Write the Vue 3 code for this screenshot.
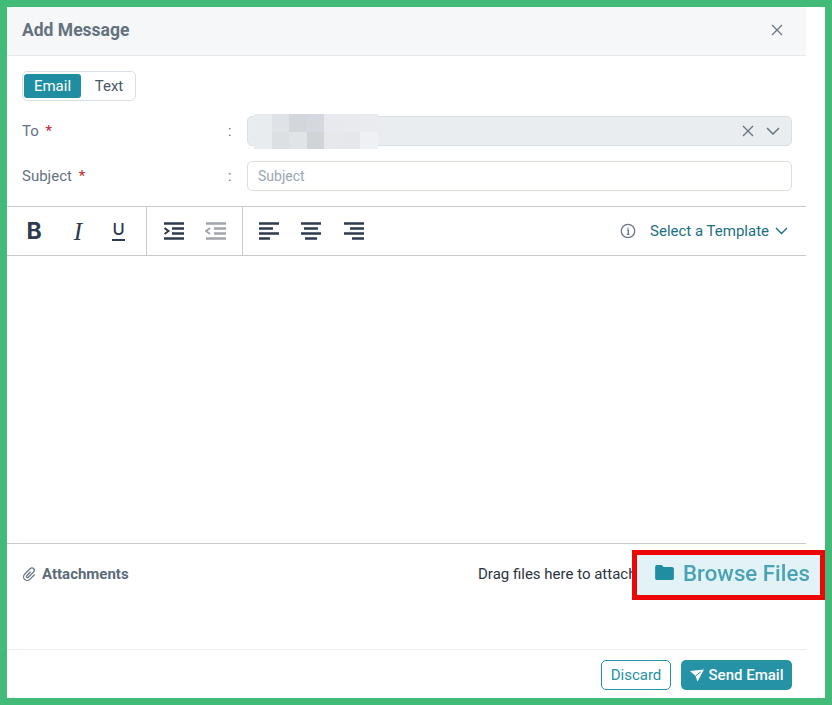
<script setup>
const cells = ['#e9ecef','#dfe2e6','#d3d6db','#d5d8de','#e7e9ee','#e8eaee','#e9ebef','#e9ecef','#dde0e3','#e1e4e7','#d1d4d7','#e6e8ec','#e5e7ea','#eef0f3']
</script>

<template>
  <div class="frame">
    <div class="modal">
      <header class="head">
        <h1>Add Message</h1>
        <svg width="12" height="12" viewBox="0 0 12 12"><path d="M1 1l10 10M11 1L1 11" stroke="#6b7785" stroke-width="1.3" fill="none" /></svg>
      </header>

      <div class="form">
        <div class="toggle">
          <span class="tab on">Email</span>
          <span class="tab">Text</span>
        </div>
        <div class="row r-to">
          <label>To <em>*</em></label>
          <span class="colon">:</span>
          <div class="field filled">
            <svg width="12" height="12" viewBox="0 0 12 12"><path d="M1 1l10 10M11 1L1 11" stroke="#667382" stroke-width="1.3" fill="none" /></svg>
            <svg width="14" height="8" viewBox="0 0 14 8"><path d="M1 1l6 6 6-6" stroke="#5f6d7c" stroke-width="1.4" fill="none" /></svg>
          </div>
          <div class="mosaic">
            <i v-for="(c, n) in cells" :key="n" :style="{ background: c }"></i>
          </div>
        </div>
        <div class="row r-sub">
          <label>Subject <em>*</em></label>
          <span class="colon">:</span>
          <div class="field"><span class="ph">Subject</span></div>
        </div>
      </div>

      <div class="toolbar">
        <div class="group g1">
          <span class="glyph b">B</span>
          <span class="glyph i">I</span>
          <span class="glyph u">U</span>
        </div>
        <div class="group g2">
          <svg width="21" height="18" viewBox="0 0 21 18"><path d="M0 1.5h20M8 6.5h12M8 11.5h12M0 16.5h20" stroke="#2e3a4d" stroke-width="2.4" fill="none" /><path d="M.5 6l4 3-4 3" stroke="#2e3a4d" stroke-width="2" fill="none" /></svg>
          <svg width="21" height="18" viewBox="0 0 21 18"><path d="M1 1.5h20M9 6.5h12M9 11.5h12M1 16.5h20" stroke="#a0a5ab" stroke-width="2.4" fill="none" /><path d="M5 6L1 9l4 3" stroke="#a0a5ab" stroke-width="2" fill="none" /></svg>
        </div>
        <div class="group g3">
          <svg width="20" height="18" viewBox="0 0 20 18"><path d="M0 1.5h20M0 6.5h14M0 11.5h20M0 16.5h11" stroke="#2e3a4d" stroke-width="2.4" fill="none" /></svg>
          <svg width="20" height="18" viewBox="0 0 20 18"><path d="M0 1.5h20M3 6.5h14M0 11.5h20M4 16.5h12" stroke="#2e3a4d" stroke-width="2.4" fill="none" /></svg>
          <svg class="last" width="20" height="18" viewBox="0 0 20 18"><path d="M0 1.5h20M6 6.5h14M0 11.5h20M8 16.5h12" stroke="#2e3a4d" stroke-width="2.4" fill="none" /></svg>
        </div>
        <div class="template">
          <svg class="info" width="16" height="16" viewBox="0 0 16 16"><circle cx="8" cy="8" r="6.7" stroke="#6b7785" stroke-width="1.3" fill="none" /><path d="M7 7.2h1.3v4M6.8 11.3h2.6M8 4.4v1.4" stroke="#6b7785" stroke-width="1.3" fill="none" /></svg>
          <span>Select a Template</span>
          <svg width="13" height="8" viewBox="0 0 13 8"><path d="M1 1l5.5 5.5L12 1" stroke="#1b6f7f" stroke-width="1.4" fill="none" /></svg>
        </div>
      </div>

      <div class="editor"></div>

      <div class="attach">
        <div class="att-left">
          <svg class="clip" width="15" height="15" viewBox="0 0 14 14"><path transform="rotate(45 7 7)" d="M10.4 3.5v6.5a3.4 3.4 0 0 1-6.8 0V2.6a2.2 2.2 0 0 1 4.4 0v7a1 1 0 0 1-2 0V4.5" stroke="#6f7b88" stroke-width="1.25" fill="none" /></svg>
          <strong>Attachments</strong>
        </div>
        <span class="drag">Drag files here to attach</span>
      </div>

      <footer class="foot">
        <button class="btn ghost">Discard</button>
        <button class="btn solid">
          <svg width="14" height="13" viewBox="0 0 14 13"><path d="M0 2L14 .5 7.5 12.5 5.5 7z" fill="#fff" /><path d="M5.5 7l5-4" stroke="#2592a6" stroke-width="1" /></svg>
          Send Email
        </button>
      </footer>
    </div>

    <div class="highlight">
      <svg width="19" height="15" viewBox="0 0 20 16"><path d="M0 2a2 2 0 0 1 2-2h5l2 2h9a2 2 0 0 1 2 2v10a2 2 0 0 1-2 2H2a2 2 0 0 1-2-2z" fill="#1f8ea3" /></svg>
      <span>Browse Files</span>
    </div>
  </div>
</template>

<style scoped>
.frame {
  position: relative;
  box-sizing: border-box;
  width: 832px;
  height: 705px;
  border: 7px solid #42ba78;
  background: #fff;
  font-family: Roboto, "Liberation Sans", sans-serif;
  overflow: hidden;
}
.modal {
  width: 799px;
  height: 691px;
  display: flex;
  flex-direction: column;
}
.head {
  box-sizing: border-box;
  height: 49px;
  flex: none;
  padding: 0 23px 3px 15px;
  background: #f6f7f9;
  border-bottom: 1px solid #e7eaed;
  display: flex;
  align-items: center;
  justify-content: space-between;
}
.head h1 {
  margin: 0;
  font-size: 17.5px;
  font-weight: 700;
  color: #64727f;
}
.form {
  box-sizing: border-box;
  height: 150px;
  flex: none;
  padding: 15px 14px 0 15px;
}
.toggle {
  box-sizing: border-box;
  display: inline-flex;
  width: 114px;
  height: 30px;
  padding: 2px 1px;
  border: 1px solid #d8dee7;
  border-radius: 5px;
  font-size: 15px;
  color: #4a5767;
}
.tab {
  flex: 1;
  display: flex;
  align-items: center;
  justify-content: center;
  padding-left: 3px;
}
.tab.on {
  flex: 0 0 57px;
  background: #1f8ea3;
  color: #fff;
  border-radius: 3px;
  padding-left: 0;
}
.row {
  position: relative;
  display: flex;
  align-items: center;
  height: 30px;
  font-size: 15px;
  color: #66717f;
}
.r-to { margin-top: 15px; }
.r-sub { margin-top: 15px; }
.row label { width: 206px; }
.row em {
  font-style: normal;
  color: #c0272d;
  margin-left: 3px;
}
.colon { width: 19px; font-size: 14px; color: #5d6977; }
.field {
  box-sizing: border-box;
  flex: 1;
  height: 30px;
  border: 1px solid #dadfe5;
  border-radius: 5px;
  display: flex;
  align-items: center;
  padding-left: 10px;
}
.field.filled {
  background: #e9edf0;
  justify-content: flex-end;
  gap: 12px;
  padding-right: 11px;
}
.ph { font-size: 14px; color: #9aa6b2; }
.mosaic {
  position: absolute;
  left: 232px;
  top: -2px;
  width: 124px;
  height: 35px;
  display: grid;
  grid-template-columns: 18px 17px 18px 17px 18px 18px 18px;
  grid-template-rows: 1fr 1fr;
}
.toolbar {
  box-sizing: border-box;
  height: 50px;
  flex: none;
  border-top: 1px solid #c9c9c9;
  border-bottom: 1px solid #c9c9c9;
  display: flex;
  align-items: stretch;
}
.group {
  display: flex;
  align-items: center;
  box-sizing: border-box;
  border-right: 1px solid #c9c9c9;
}
.g1 { width: 140px; padding-left: 17px; }
.g2 { width: 96px; padding-left: 17px; gap: 20px; }
.g3 { border: 0; padding-left: 16px; gap: 22px; }
.last { margin-left: 1px; }
.glyph {
  color: #2e3a4d;
  text-align: center;
  line-height: 1;
}
.b { font-family: Inter, sans-serif; font-weight: 700; font-size: 23px; width: 20px; margin-right: 24px; }
.i { font-family: "Liberation Serif", serif; font-style: italic; font-size: 25px; width: 20px; margin-right: 24px; }
.u {
  font-family: Inter, sans-serif;
  font-size: 16.5px;
  font-weight: 500;
  width: 13px;
  padding-bottom: 1px;
  border-bottom: 2px solid #2e3a4d;
}
.template {
  margin-left: auto;
  padding-right: 18px;
  display: flex;
  align-items: center;
  font-size: 15px;
  color: #1b6f7f;
}
.info { margin-right: 14px; }
.template span { margin-right: 6px; }
.editor { height: 287px; flex: none; }
.attach {
  box-sizing: border-box;
  height: 107px;
  flex: none;
  border-top: 1px solid #c9c9c9;
  border-bottom: 1px solid #ececec;
  padding: 21px 0 0 15px;
  display: flex;
  justify-content: space-between;
  align-items: flex-start;
  position: relative;
}
.att-left {
  display: flex;
  align-items: center;
  gap: 5px;
  color: #5c6b7a;
  font-size: 15px;
}
.drag {
  position: absolute;
  left: 471px;
  top: 21px;
  font-size: 15px;
  color: #2b3440;
}
.foot {
  display: flex;
  justify-content: flex-end;
  gap: 10px;
  padding: 10px 14px 0 0;
}
.btn {
  box-sizing: border-box;
  height: 30px;
  border-radius: 5px;
  font: 500 15px Roboto, sans-serif;
  display: flex;
  align-items: center;
  justify-content: center;
  padding: 0;
}
.ghost {
  width: 70px;
  background: #fff;
  border: 1px solid #2592a6;
  color: #2592a6;
  font-weight: 400;
}
.solid {
  width: 111px;
  background: #2592a6;
  border: 0;
  color: #fff;
  gap: 5px;
}
.highlight {
  position: absolute;
  left: 625px;
  top: 543px;
  box-sizing: border-box;
  width: 193px;
  height: 50px;
  border: 5px solid #ec0606;
  background: #e3f2f6;
  display: flex;
  align-items: center;
  padding: 0 0 5px 18px;
  gap: 9px;
  font-size: 22.3px;
  font-weight: 500;
  color: #4aa3b5;
}
.highlight span { filter: blur(0.4px); }
</style>

<style>
html, body { margin: 0; background: #fff; }
</style>
